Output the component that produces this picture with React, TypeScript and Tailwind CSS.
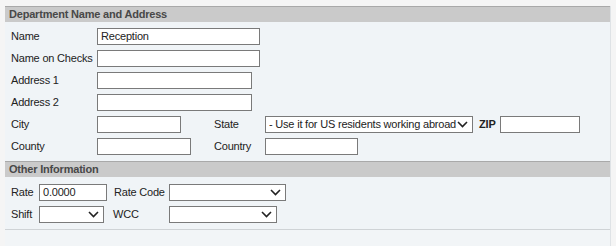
import React from 'react';

const Chevron = () => (
    <svg width="11" height="7" viewBox="0 0 11 7" className="shrink-0">
        <path d="M1 1 L5.5 5.5 L10 1" fill="none" stroke="#222" strokeWidth="1.6" />
    </svg>
);

const Input = ({ w, value = '' }: { w: string; value?: string }) => (
    <div className={`${w} h-[17px] shrink-0 border border-[#7a7a7a] bg-white px-[3px] leading-[15px] text-[#222] whitespace-nowrap`}>
        {value}
    </div>
);

const Select = ({ w, value = '' }: { w: string; value?: string }) => (
    <div className={`${w} h-[17px] shrink-0 border border-[#7a7a7a] bg-white pl-[3px] pr-[4px] flex items-center justify-between text-[#222]`}>
        <span className="whitespace-nowrap overflow-hidden">{value}</span>
        <Chevron />
    </div>
);

const Header = ({ title }: { title: string }) => (
    <div className="h-[16px] border-t border-[#a9a9a9] bg-[#cacaca] pl-[4px] font-bold leading-[15px] text-[#484848] whitespace-nowrap">
        {title}
    </div>
);

const Row = ({ label, children }: { label: string; children: React.ReactNode }) => (
    <div className="h-[22px] flex items-center">
        <span className="w-[86px] shrink-0 whitespace-nowrap">{label}</span>
        {children}
    </div>
);

export default function App() {
    return (
        <div className="w-[616px] h-[246px] bg-[#f5f5f5] pt-[6px] pl-[5px] pr-[5px] overflow-hidden" style={{ fontFamily: '"Liberation Sans", Arial, sans-serif' }}>
            <div className="h-[240px] bg-[#f0f4f7] border-r border-[#dfe3e6] text-[11px] tracking-[-0.2px] text-[#222]">
                <Header title="Department Name and Address" />
                <div className="pl-[6px] pt-[3px]">
                    <Row label="Name">
                        <Input w="w-[163px]" value="Reception" />
                    </Row>
                    <Row label="Name on Checks">
                        <Input w="w-[163px]" />
                    </Row>
                    <Row label="Address 1">
                        <Input w="w-[155px]" />
                    </Row>
                    <Row label="Address 2">
                        <Input w="w-[155px]" />
                    </Row>
                    <Row label="City">
                        <Input w="w-[84px]" />
                        <span className="w-[51px] ml-[33px] shrink-0 whitespace-nowrap">State</span>
                        <Select w="w-[208px]" value="- Use it for US residents working abroad" />
                        <span className="ml-[6px] w-[21px] shrink-0 font-bold whitespace-nowrap">ZIP</span>
                        <Input w="w-[80px]" />
                    </Row>
                    <Row label="County">
                        <Input w="w-[94px]" />
                        <span className="w-[51px] ml-[23px] shrink-0 whitespace-nowrap">Country</span>
                        <Input w="w-[93px]" />
                    </Row>
                </div>
                <div className="mt-[4px]">
                    <Header title="Other Information" />
                </div>
                <div className="pl-[6px] pt-[4px]">
                    <div className="h-[22px] flex items-center">
                        <span className="w-[28px] shrink-0 whitespace-nowrap">Rate</span>
                        <Input w="w-[68px]" value="0.0000" />
                        <span className="ml-[7px] w-[55px] shrink-0 whitespace-nowrap">Rate Code</span>
                        <Select w="w-[117px]" />
                    </div>
                    <div className="h-[22px] flex items-center">
                        <span className="w-[28px] shrink-0 whitespace-nowrap">Shift</span>
                        <Select w="w-[65px]" />
                        <span className="ml-[9px] w-[56px] shrink-0 whitespace-nowrap">WCC</span>
                        <Select w="w-[108px]" />
                    </div>
                </div>
                <div className="mt-[4px] border-t border-[#cfd3d6] h-[20px] bg-[#f2f5f7]" />
            </div>
        </div>
    );
}
